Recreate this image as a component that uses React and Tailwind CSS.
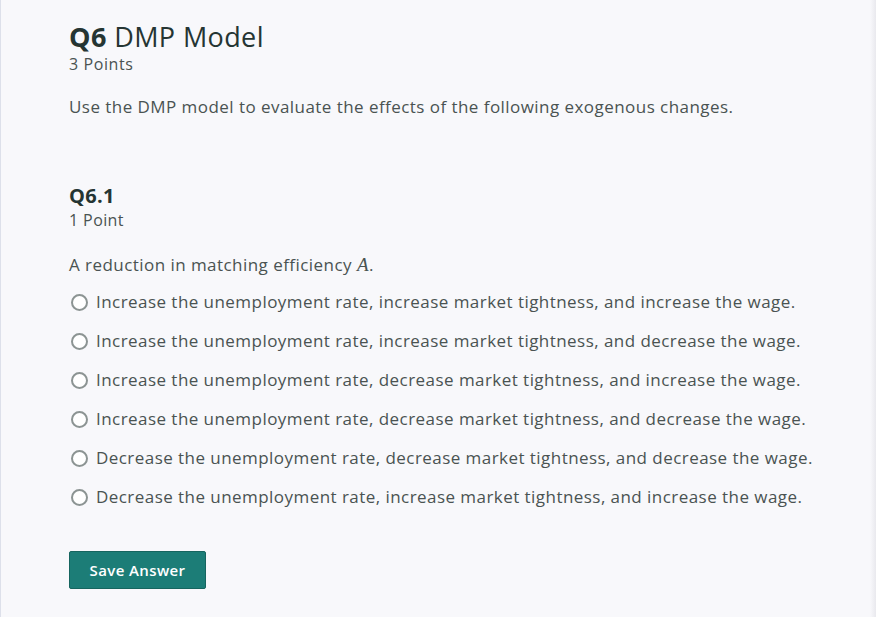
import React from "react";

const options = [
  "Increase the unemployment rate, increase market tightness, and increase the wage.",
  "Increase the unemployment rate, increase market tightness, and decrease the wage.",
  "Increase the unemployment rate, decrease market tightness, and increase the wage.",
  "Increase the unemployment rate, decrease market tightness, and decrease the wage.",
  "Decrease the unemployment rate, decrease market tightness, and decrease the wage.",
  "Decrease the unemployment rate, increase market tightness, and increase the wage.",
];

export default function App() {
  return (
    <div
      className="w-[876px] h-[617px] bg-[#f8f8fb] border-l border-[#dde0ea] overflow-hidden relative text-[#4a5352]"
      style={{ fontFamily: "'Open Sans', sans-serif" }}
    >
      <div className="absolute right-0 top-0 bottom-0 w-[6px] bg-gradient-to-r from-transparent to-[#e9e9ee]" />
      <div className="pl-[68px] pt-[20px]">
        <h1 className="text-[27px] leading-[34px] text-[#253533] tracking-[0.4px]">
          <span className="font-bold">Q6</span> DMP Model
        </h1>
        <div className="text-[16px] leading-[20px] tracking-[0.6px]">3 Points</div>
        <p className="text-[17px] leading-[22px] mt-[22px] tracking-[0.45px]">
          Use the DMP model to evaluate the effects of the following exogenous changes.
        </p>
        <h2 className="text-[20px] leading-[24px] font-bold text-[#253533] mt-[66px] tracking-[0.3px]">Q6.1</h2>
        <div className="text-[16px] leading-[20px] mt-[2px] tracking-[0.4px]">1 Point</div>
        <p className="text-[17px] leading-[22px] mt-[24px] tracking-[0.45px]">
          A reduction in matching efficiency{" "}
          <span className="text-[19px] italic" style={{ fontFamily: "'Liberation Serif', serif" }}>A</span>.
        </p>
        <div className="mt-[15px] flex flex-col gap-[17px]">
          {options.map((o, i) => (
            <label key={i} className="flex items-center gap-[8px] text-[17px] leading-[22px] tracking-[0.45px]">
              <span className="w-[17px] h-[17px] rounded-full border-2 border-[#8c9493] bg-white shrink-0 ml-[2px]" />
              <span>{o}</span>
            </label>
          ))}
        </div>
        <button className="mt-[43px] w-[137px] h-[38px] bg-[#1c7d77] border border-[#16655f] rounded-[2px] text-white text-[15px] font-semibold tracking-[0.4px]">
          Save Answer
        </button>
      </div>
    </div>
  );
}
